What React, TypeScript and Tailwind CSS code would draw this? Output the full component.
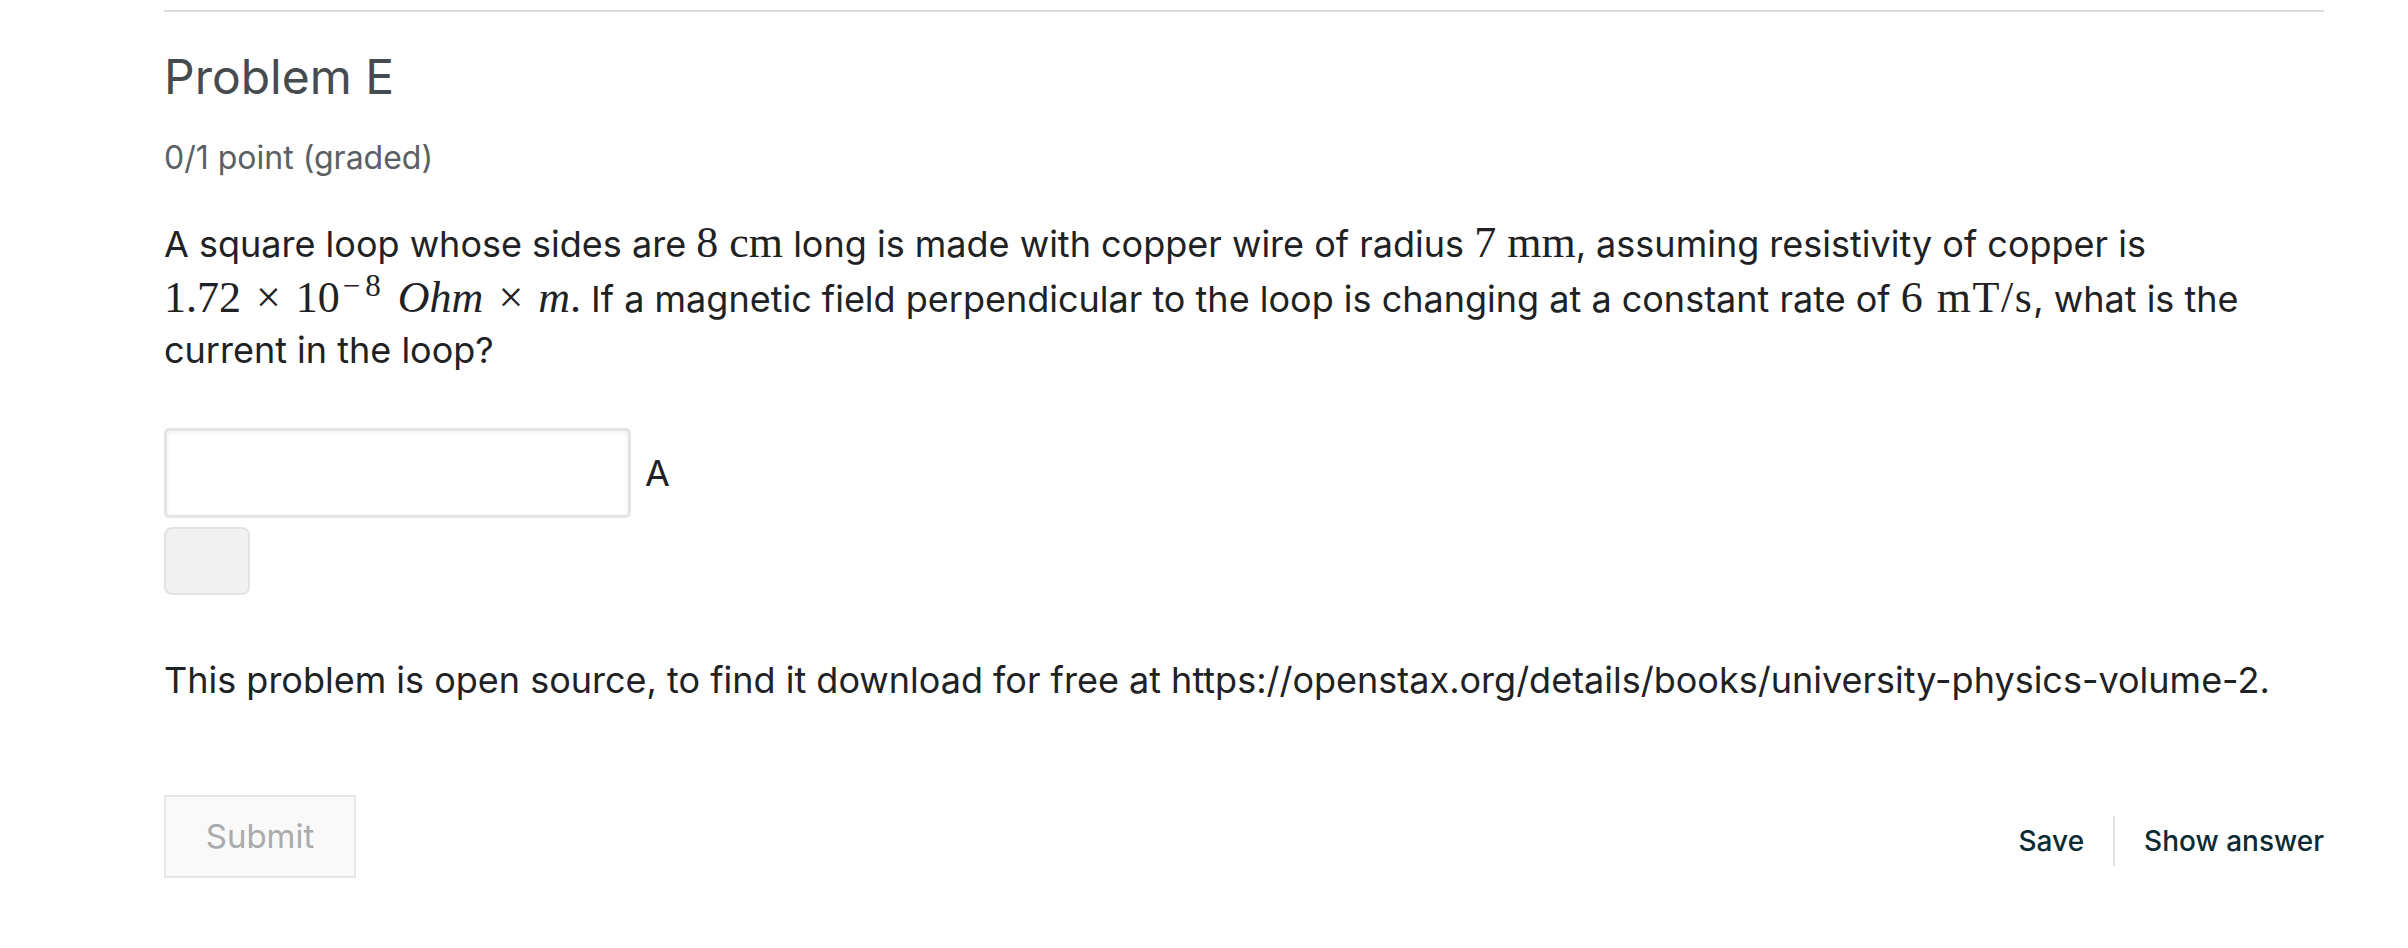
import React from "react";

const M = ({ children, italic = false, cls = "" }: { children: React.ReactNode; italic?: boolean; cls?: string }) => (
  <span
    className={`font-['Liberation_Serif','Times_New_Roman',serif] text-[44px] leading-none ${italic ? "italic" : ""} ${cls}`}
  >
    {children}
  </span>
);

export default function App() {
  return (
    <div className="min-h-screen w-full bg-white font-['Inter','Noto_Sans',sans-serif]">
      <div className="ml-[164px] w-[2160px] pt-[10px]">
        <div className="border-t-2 border-[#dddddd]" />

        <h3 className="mt-[37px] text-[48px] leading-[56px] font-normal text-[#464b50]">Problem E</h3>

        <div className="mt-[30px] text-[32px] leading-[45px] text-[#5b6065]">0/1 point (graded)</div>

        <p className="mt-[39px] text-[36px] leading-[51px] text-[#1f2225]">
          A square loop whose sides are <M>8 cm</M> long is made with copper wire of radius <M>7 mm</M>, assuming
          resistivity of copper is{" "}
          <span className="whitespace-nowrap">
            <M>1.72</M>
            <M>
              <span className="mx-[15px]">×</span>
            </M>
            <M>10</M>
            <span className="ml-[3px] font-['Liberation_Serif','Times_New_Roman',serif] text-[31px] leading-none align-[16px]">
              <span className="mr-[5px]">−</span>8
            </span>
            <span className="inline-block w-[17px]" />
            <M italic>Ohm</M>
            <M>
              <span className="mx-[15px]">×</span>
            </M>
            <M italic>m</M>
            <M>.</M>
          </span>{" "}
          If a magnetic field perpendicular to the loop is changing at a constant rate of{" "}
          <M cls="tracking-[1.5px]">6 mT/s</M>, what is the current in the loop?
        </p>

        <div className="mt-[52px] flex items-center">
          <input
            type="text"
            aria-label="answer"
            className="h-[90px] w-[467px] rounded-[5px] border-[3px] border-[#e3e4e6] bg-white shadow-[inset_0_1px_4px_rgba(0,0,0,0.08)] outline-none"
          />
          <span className="ml-[14px] text-[36px] leading-[51px] text-[#1f2225]">A</span>
        </div>

        <div className="mt-[9px] h-[68px] w-[86px] rounded-[8px] border-2 border-[#e3e3e3] bg-[#f1f1f1]" />

        <p className="mt-[60px] text-[36px] leading-[51px] text-[#1f2225]">
          This problem is open source, to find it download for free at
          https://openstax.org/details/books/university-physics-volume-2.
        </p>

        <div className="mt-[89px] flex items-center justify-between">
          <button
            type="button"
            disabled
            className="h-[83px] w-[192px] border-2 border-[#e6e6e6] bg-[#f9f9f9] text-[33px] leading-none text-[#ababab]"
          >
            Submit
          </button>
          <div className="flex items-center pt-[8px]">
            <span className="text-[28px] font-medium leading-none text-[#0a2b33]">Save</span>
            <div className="mx-[29px] h-[50px] w-[2px] bg-[#dfe2e5]" />
            <span className="text-[28px] font-medium leading-none text-[#0a2b33]">Show answer</span>
          </div>
        </div>
      </div>
    </div>
  );
}
